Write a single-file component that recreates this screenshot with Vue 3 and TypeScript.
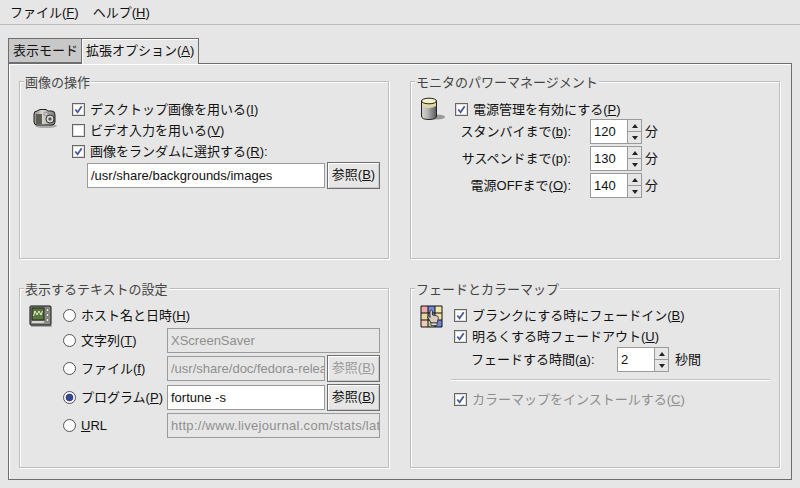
<script setup lang="ts">
const checkPath = 'M2.5 6 L5 9 L9.5 2.5'
</script>

<template>
  <div class="window">
    <nav class="menubar">
      <span class="menu">ファイル(<u>F</u>)</span>
      <span class="menu">ヘルプ(<u>H</u>)</span>
    </nav>
    <div class="tabs">
      <span class="tab inactive">表示モード</span>
      <span class="tab active">拡張オプション(<u>A</u>)</span>
    </div>
    <div class="notebook">
      <section class="frame">
        <span class="legend">画像の操作</span>
        <div class="body b1">
          <svg class="icon cam" width="24" height="20" viewBox="0 0 24 20">
            <defs>
              <linearGradient id="camg" x1="0" y1="0" x2="1" y2="0"><stop offset="0" stop-color="#8c8c86"/><stop offset=".4" stop-color="#d8d8d0"/><stop offset="1" stop-color="#77776f"/></linearGradient>
            </defs>
            <ellipse cx="13" cy="18" rx="11" ry="2" fill="#aaa"/>
            <path d="M1 6 Q1 3 4 3 L7 1.500 H13 L15 3 H19 Q22 3 22 7 V14 Q22 17 19 17 H4 Q1 17 1 14 Z" fill="url(#camg)" stroke="#222"/>
            <rect x="3" y="6" width="6" height="10" fill="#5e5e54"/>
            <circle cx="17" cy="11" r="4" fill="#ddd" stroke="#333"/>
            <circle cx="17" cy="11" r="1.700" fill="#555"/>
            <rect x="11" y="5" width="4" height="2" fill="#eee" stroke="#555" stroke-width=".5"/>
          </svg>
          <div class="stack s1">
            <label class="row"><span class="check"><svg viewBox="0 0 12 12"><path :d="checkPath"/></svg></span><span>デスクトップ画像を用いる(<u>I</u>)</span></label>
            <label class="row"><span class="check"></span><span>ビデオ入力を用いる(<u>V</u>)</span></label>
            <label class="row"><span class="check"><svg viewBox="0 0 12 12"><path :d="checkPath"/></svg></span><span>画像をランダムに選択する(<u>R</u>):</span></label>
            <div class="pathrow">
              <span class="entry wide">/usr/share/backgrounds/images</span>
              <span class="btn">参照(<u>B</u>)</span>
            </div>
          </div>
        </div>
      </section>

      <section class="frame">
        <span class="legend">モニタのパワーマネージメント</span>
        <div class="body b2">
          <svg class="icon cyl" width="25" height="24" viewBox="0 0 25 24">
            <defs>
              <linearGradient id="cylg" x1="0" y1="0" x2="1" y2="0"><stop offset="0" stop-color="#d5d5d0"/><stop offset=".35" stop-color="#bdbdb8"/><stop offset=".8" stop-color="#77777a"/><stop offset="1" stop-color="#55555a"/></linearGradient>
            </defs>
            <ellipse cx="17" cy="20" rx="8" ry="2.500" fill="#999"/>
            <path d="M1.500 4 V19 Q1.500 22.500 9 22.500 Q16.500 22.500 16.500 19 V4 Z" fill="url(#cylg)" stroke="#222"/>
            <path d="M2 4 V9 Q9 13 16 9 V4 Z" fill="#e0d8a8"/>
            <ellipse cx="9" cy="4" rx="7.500" ry="2.800" fill="#f4f0c8" stroke="#222"/>
          </svg>
          <div class="stack s2">
            <label class="row r2"><span class="check"><svg viewBox="0 0 12 12"><path :d="checkPath"/></svg></span><span>電源管理を有効にする(<u>P</u>)</span></label>
            <div class="spinrow">
              <span class="spinlabel">スタンバイまで(<u>b</u>):</span>
              <span class="spin"><span class="val">120</span><span class="arrows"><i class="up"></i><i class="down"></i></span></span>
              <span>分</span>
            </div>
            <div class="spinrow">
              <span class="spinlabel">サスペンドまで(p):</span>
              <span class="spin"><span class="val">130</span><span class="arrows"><i class="up"></i><i class="down"></i></span></span>
              <span>分</span>
            </div>
            <div class="spinrow">
              <span class="spinlabel">電源OFFまで(<u>O</u>):</span>
              <span class="spin"><span class="val">140</span><span class="arrows"><i class="up"></i><i class="down"></i></span></span>
              <span>分</span>
            </div>
          </div>
        </div>
      </section>

      <section class="frame">
        <span class="legend">表示するテキストの設定</span>
        <div class="body b3">
          <svg class="icon mon" width="24" height="22" viewBox="0 0 24 22">
            <rect x="2" y="20" width="21" height="2" fill="#aaa"/>
            <rect x="1" y="1" width="21" height="19" rx="1" fill="#8c8c86" stroke="#111"/>
            <rect x="3" y="3" width="12" height="12" fill="#58783f" stroke="#222"/>
            <path d="M4.500 11 L6 6 L8 10 L10 6 L12 10 L13.500 6" fill="none" stroke="#e8f0d0" stroke-width="1"/>
            <path d="M3 17 H15" stroke="#eee" stroke-width="1.500"/>
            <circle cx="18.500" cy="5" r="1.500" fill="#eee" stroke="#333" stroke-width=".5"/>
            <circle cx="18.500" cy="10" r="1.500" fill="#eee" stroke="#333" stroke-width=".5"/>
            <circle cx="18.500" cy="15" r="1.500" fill="#eee" stroke="#333" stroke-width=".5"/>
          </svg>
          <div class="radios">
            <label class="row span"><span class="radio"></span><span>ホスト名と日時(<u>H</u>)</span></label>
            <label class="row"><span class="radio"></span><span>文字列(<u>T</u>)</span></label>
            <span class="entry dis full">XScreenSaver</span>
            <label class="row"><span class="radio"></span><span>ファイル(<u>f</u>)</span></label>
            <div class="pathrow tight">
              <span class="entry dis grow">/usr/share/doc/fedora-release</span>
              <span class="btn disbtn">参照(<u>B</u>)</span>
            </div>
            <label class="row"><span class="radio on"></span><span>プログラム(<u>P</u>)</span></label>
            <div class="pathrow tight">
              <span class="entry grow">fortune -s</span>
              <span class="btn">参照(<u>B</u>)</span>
            </div>
            <label class="row"><span class="radio"></span><span><u>U</u>RL</span></label>
            <span class="entry dis full url">http://www.livejournal.com/stats/latest-rss.bml</span>
          </div>
        </div>
      </section>

      <section class="frame">
        <span class="legend">フェードとカラーマップ</span>
        <div class="body b4">
          <svg class="icon pal" width="24" height="24" viewBox="0 0 24 24">
            <rect x="1" y="1" width="7" height="7" fill="#f0a8a8"/>
            <rect x="8" y="1" width="7" height="7" fill="#7088d8"/>
            <rect x="15" y="1" width="7" height="7" fill="#f4e8a8"/>
            <rect x="1" y="8" width="7" height="7" fill="#e8d8a0"/>
            <rect x="8" y="8" width="7" height="7" fill="#8098d8"/>
            <rect x="15" y="8" width="7" height="7" fill="#f0e0b0"/>
            <rect x="1" y="15" width="7" height="7" fill="#f4c8b8"/>
            <rect x="8" y="15" width="7" height="7" fill="#b0d098"/>
            <rect x="15" y="15" width="7" height="7" fill="#7088d0"/>
            <path d="M1 1 H22 V22 H1 Z M8 1 V22 M15 1 V22 M1 8 H22 M1 15 H22" fill="none" stroke="#111"/>
            <path d="M10 16 L7.500 12 L8.500 11 L10 12.500 V6 Q11.500 4.500 12.500 6 V10 L17.500 11 Q19 12 18 15 L17 18 H11 Z" fill="#d8ccc0" stroke="#222" stroke-width=".8"/>
            <rect x="11" y="18" width="6" height="2.500" fill="#ddd" stroke="#222" stroke-width=".7"/>
          </svg>
          <div class="stack s4">
            <label class="row r4"><span class="check"><svg viewBox="0 0 12 12"><path :d="checkPath"/></svg></span><span>ブランクにする時にフェードイン(<u>B</u>)</span></label>
            <label class="row r4"><span class="check"><svg viewBox="0 0 12 12"><path :d="checkPath"/></svg></span><span>明るくする時フェードアウト(<u>U</u>)</span></label>
            <div class="spinrow fade">
              <span class="fadelabel">フェードする時間(<u>a</u>):</span>
              <span class="spin"><span class="val">2</span><span class="arrows"><i class="up"></i><i class="down"></i></span></span>
              <span class="unit">秒間</span>
            </div>
            <div class="sep"></div>
            <label class="row muted"><span class="check"><svg viewBox="0 0 12 12"><path :d="checkPath"/></svg></span><span>カラーマップをインストールする(<u>C</u>)</span></label>
          </div>
        </div>
      </section>
    </div>
  </div>
</template>

<style>
html, body { margin: 0; background: #e6e6e6; }
</style>

<style scoped>
.window {
  width: 800px;
  height: 488px;
  overflow: hidden;
  background: #e6e6e6;
  color: #111;
  font: 13px/18px "Liberation Sans", "Noto Sans CJK JP", sans-serif;
  box-sizing: border-box;
}
u { text-underline-offset: 1px; }
.menubar {
  height: 25px;
  box-sizing: border-box;
  display: flex;
  gap: 14px;
  padding: 4px 0 0 10px;
  border-bottom: 1px solid #bcbcbc;
}
.tabs {
  display: flex;
  align-items: flex-end;
  height: 39px;
  box-sizing: border-box;
  margin-bottom: -1px;
  padding-left: 8px;
  position: relative;
  z-index: 1;
}
.tab {
  box-sizing: border-box;
  border: 1px solid #6e6e6e;
  border-bottom: none;
  padding: 0 4px;
  white-space: nowrap;
  line-height: 24px;
}
.inactive {
  width: 74px;
  height: 25px;
  background: #c8c8c8;
  border-bottom: 1px solid #6e6e6e;
  margin-bottom: 1px;
}
.active {
  width: 118px;
  height: 26px;
  margin-left: -1px;
  background: #e6e6e6;
  box-shadow: inset 1px 1px #fff;
}
.notebook {
  width: 784px;
  height: 417px;
  margin-left: 8px;
  box-sizing: border-box;
  border: 1px solid #6e6e6e;
  box-shadow: inset 1px 1px #fff;
  padding: 17px 11px 11px 10px;
  display: grid;
  grid-template-columns: 370px 370px;
  grid-template-rows: 178px 180px;
  column-gap: 21px;
  row-gap: 29px;
}
.frame {
  position: relative;
  border: 1px solid #bdbdbd;
  box-shadow: 1px 1px #fff, inset 1px 1px #fff;
}
.legend {
  position: absolute;
  top: -8px;
  left: 4px;
  padding: 0 1px;
  background: #e6e6e6;
  color: #444;
  white-space: nowrap;
}
.body { display: flex; align-items: flex-start; }
.b1 { padding: 17px 0 0 13px; }
.b2 { padding: 14px 0 0 9px; }
.b3 { padding: 16px 0 0 9px; }
.b4 { padding: 16px 0 0 9px; }
.icon { flex: none; }
.cam { margin-top: 9px; }
.cyl { margin-top: 1px; }
.stack { display: flex; flex-direction: column; }
.s1 { margin-left: 15px; }
.s2 { margin: 4px 0 0 10px; }
.s4 { margin-left: 10px; }
.row {
  display: flex;
  align-items: center;
  gap: 5px;
  height: 21px;
  white-space: nowrap;
}
.check {
  width: 11px;
  height: 11px;
  flex: none;
  background: #fff;
  border: 1px solid #666;
  box-shadow: 0 0 0 1px #ddd inset;
  display: flex;
}
.check svg { width: 11px; height: 11px; }
.check path { fill: none; stroke: #4a5a9c; stroke-width: 2; }
.pathrow { display: flex; align-items: center; gap: 2px; margin: 0 0 0 15px; }
.entry {
  box-sizing: border-box;
  height: 25px;
  line-height: 23px;
  padding: 0 3px;
  background: #fff;
  border: 1px solid #9a9a9a;
  white-space: nowrap;
  overflow: hidden;
}
.wide { width: 238px; }
.btn {
  box-sizing: border-box;
  width: 53px;
  height: 27px;
  line-height: 24px;
  text-align: center;
  background: #e6e6e6;
  border: 1px solid #6e6e6e;
  box-shadow: inset 1px 1px #fff, inset -1px -1px #c8c8c8;
  flex: none;
  white-space: nowrap;
}
.disbtn { color: #9a9a9a; }
.dis { background: #e6e6e6; color: #8e8e8e; }
.url { letter-spacing: .3px; }
.radios {
  margin-left: 10px;
  display: grid;
  grid-template-columns: 104px 213px;
  grid-template-rows: 21px 25px 27px 27px 25px;
  row-gap: 2px;
  align-items: center;
}
.radios .row { height: auto; gap: 5px; }
.span { grid-column: 1 / 3; }
.radio {
  box-sizing: border-box;
  width: 13px;
  height: 13px;
  flex: none;
  border-radius: 50%;
  background: #fff;
  border: 1px solid #555;
}
.on { background: radial-gradient(circle, #35468f 0 3.500px, #fff 4.200px); }
.full { width: 213px; }
.tight { margin: 0; width: 213px; }
.grow { flex: 1; min-width: 0; }
.r2 { height: 19px; }
.spinrow {
  display: flex;
  align-items: center;
  height: 25px;
  margin-bottom: 2px;
}
.spinlabel {
  width: 116px;
  text-align: right;
  margin-right: 19px;
  white-space: nowrap;
}
.spin {
  box-sizing: border-box;
  width: 52px;
  height: 25px;
  background: #fff;
  border: 1px solid #9a9a9a;
  display: flex;
  margin-right: 3px;
}
.val { flex: 1; padding-left: 3px; line-height: 23px; }
.arrows {
  width: 13px;
  flex: none;
  display: flex;
  flex-direction: column;
  gap: 1px;
  background: #9a9a9a;
  border-left: 1px solid #9a9a9a;
}
.arrows i {
  flex: 1;
  background: #e6e6e6;
  display: flex;
  align-items: center;
  justify-content: center;
}
.arrows i::before {
  content: "";
  border-left: 3px solid transparent;
  border-right: 3px solid transparent;
}
.up::before { border-bottom: 4px solid #222; }
.down::before { border-top: 4px solid #222; }
.r4 { height: 21px; }
.fade { margin: 0 0 0 17px; height: 25px; }
.fadelabel { width: 146px; white-space: nowrap; }
.unit { margin-left: 3px; }
.sep {
  width: 319px;
  height: 1px;
  background: #c4c4c4;
  margin: 7px 0 9px -3px;
  box-shadow: 0 1px #fff;
}
.muted { color: #8e8e8e; }
</style>
